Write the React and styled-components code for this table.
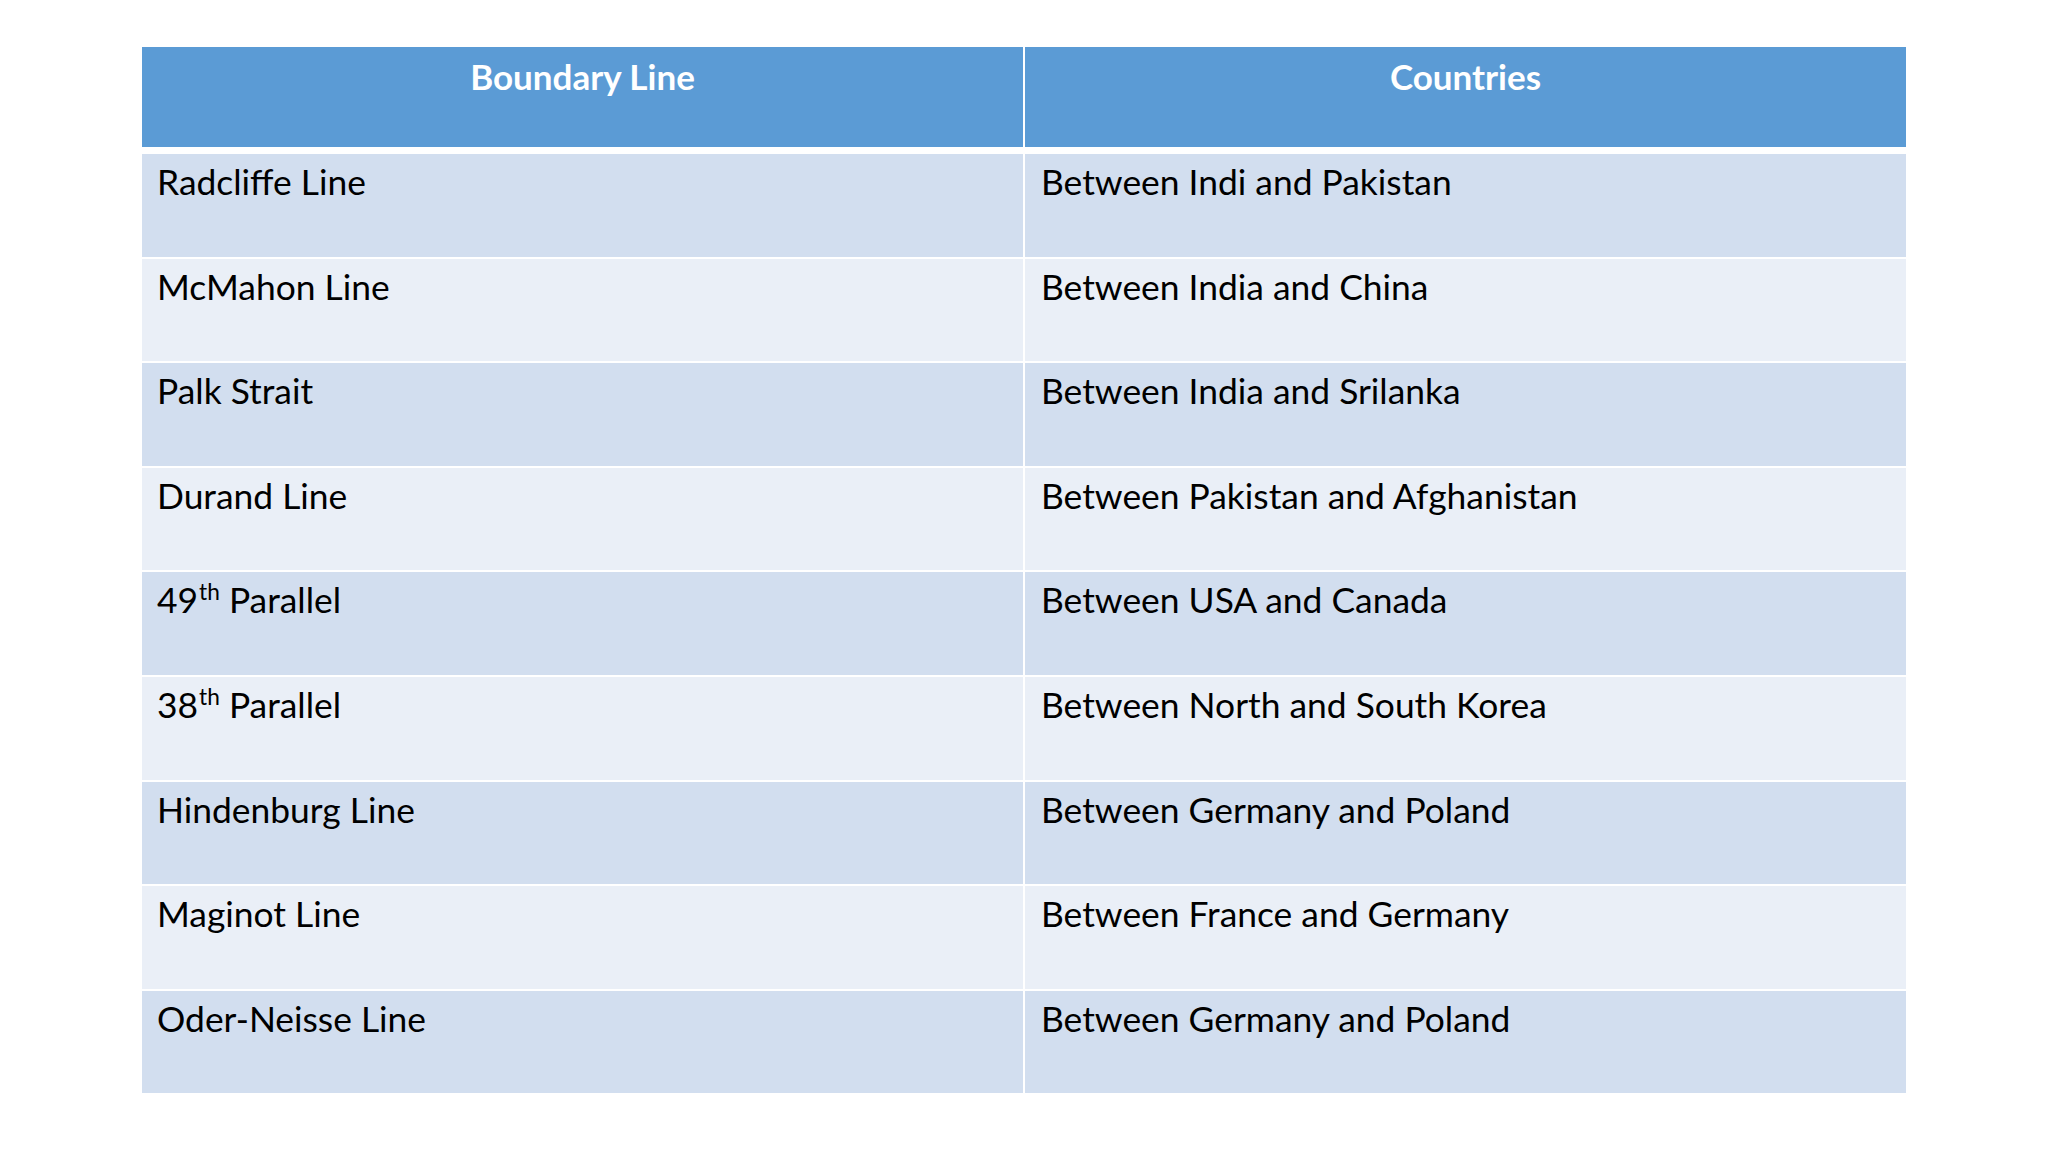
import styled, { createGlobalStyle } from 'styled-components';

const GlobalStyle = createGlobalStyle`
	html, body {
		margin: 0;
		padding: 0;
		background: #ffffff;
	}

	body {
		font-family: Lato, "Open Sans", sans-serif;
		color: #000000;
	}
`;

const Page = styled.main`
	display: flex;
	padding: 47px 0 0 142px;
	width: 2048px;
	height: 1152px;
	box-sizing: border-box;
`;

const Table = styled.div`
	display: grid;
	grid-template-columns: 881px 881px;
	grid-template-rows: 100px 7px auto;
	column-gap: 2px;
	width: 1764px;
	background: #ffffff;
`;

const HeadCell = styled.div`
	background: #5b9bd5;
	color: #ffffff;
	font-weight: 700;
	font-size: 35px;
	line-height: 1.2;
	text-align: center;
	padding-top: 8px;
	box-sizing: border-box;
`;

const Spacer = styled.div`
	grid-column: 1 / -1;
`;

const Body = styled.div`
	grid-column: 1 / -1;
	display: grid;
	grid-template-columns: 881px 881px;
	grid-auto-rows: 102.6px;
	gap: 2px;
`;

const Row = styled.div`
	display: contents;
`;

const Cell = styled.div`
	background: ${(p) => (p.$odd ? '#d2deef' : '#eaeff7')};
	font-size: 35.4px;
	line-height: 1.2;
	padding: 7px 0 0 ${(p) => (p.$first ? '15px' : '16px')};
	box-sizing: border-box;

	& sup {
		font-size: 0.64em;
		line-height: 0;
		vertical-align: 0.58em;
		margin-left: 1px;
	}
`;

const rows = [
	['Radcliffe Line', 'Between Indi and Pakistan'],
	['McMahon Line', 'Between India and China'],
	['Palk Strait', 'Between India and Srilanka'],
	['Durand Line', 'Between Pakistan and Afghanistan'],
	[<>49<sup>th</sup> Parallel</>, 'Between USA and Canada'],
	[<>38<sup>th</sup> Parallel</>, 'Between North and South Korea'],
	['Hindenburg Line', 'Between Germany and Poland'],
	['Maginot Line', 'Between France and Germany'],
	['Oder-Neisse Line', 'Between Germany and Poland'],
];

const App = () => {
	return (
		<>
			<GlobalStyle />
			<Page>
				<Table>
					<HeadCell>Boundary Line</HeadCell>
					<HeadCell>Countries</HeadCell>
					<Spacer />
					<Body>
						{rows.map(([line, countries], i) => (
							<Row key={i}>
								<Cell $odd={i % 2 === 0} $first>
									{line}
								</Cell>
								<Cell $odd={i % 2 === 0}>{countries}</Cell>
							</Row>
						))}
					</Body>
				</Table>
			</Page>
		</>
	);
};

export default App;
